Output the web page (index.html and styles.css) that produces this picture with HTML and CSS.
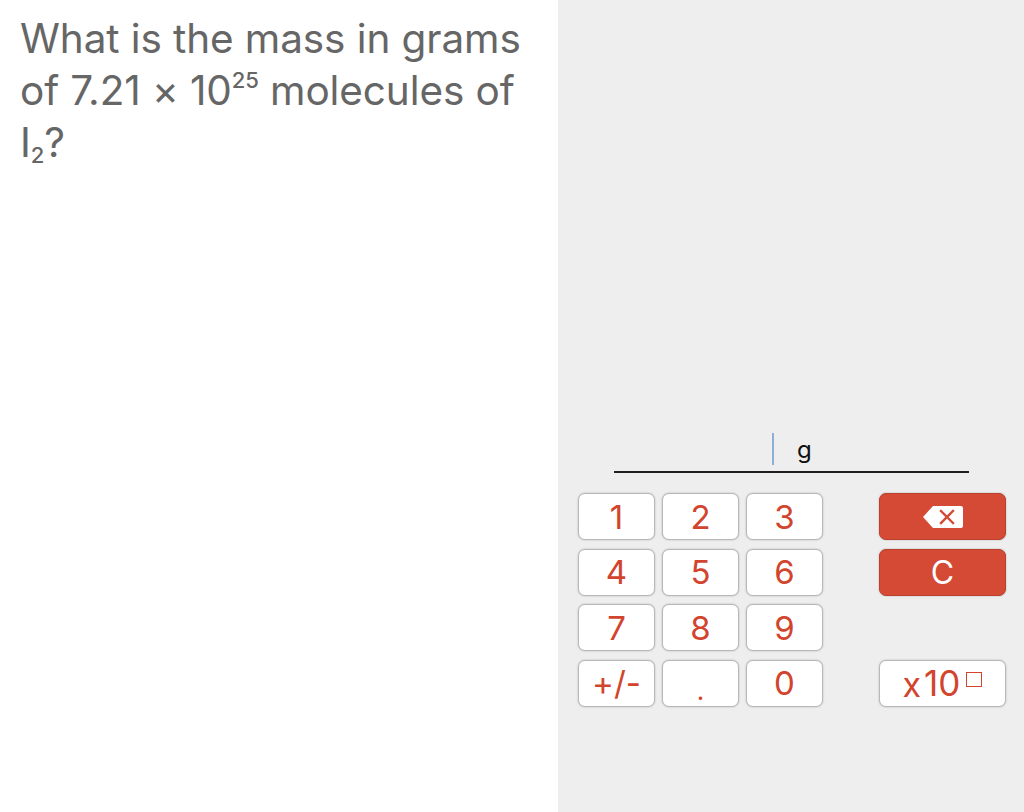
FILE: index.html
```html
<!DOCTYPE html>
<html>
<head>
<meta charset="utf-8">
<link rel="stylesheet" href="styles.css">
</head>
<body>
<div class="page">
  <div class="question">
    <p class="qtext">What is the mass in grams of 7.21 × 10<sup>25</sup> molecules of I<sub>2</sub>?</p>
  </div>
  <div class="answer-panel">
    <div class="answer-row">
      <div class="input-area"><span class="cursor"></span></div>
      <span class="unit">g</span>
    </div>
    <div class="keys">
      <div class="numpad">
        <button class="key">1</button>
        <button class="key">2</button>
        <button class="key">3</button>
        <button class="key">4</button>
        <button class="key">5</button>
        <button class="key">6</button>
        <button class="key">7</button>
        <button class="key">8</button>
        <button class="key">9</button>
        <button class="key">+/-</button>
        <button class="key dot">.</button>
        <button class="key">0</button>
      </div>
      <div class="side">
        <button class="key red"><svg class="bs" width="40" height="22" viewBox="0 0 40 22"><path d="M10 0 H38 a2 2 0 0 1 2 2 V20 a2 2 0 0 1 -2 2 H10 L0 11 Z" fill="#fff"/><path d="M18 5 L30 17 M30 5 L18 17" stroke="#d44a34" stroke-width="2.4" stroke-linecap="square"/></svg></button>
        <button class="key red c">C</button>
        <div class="spacer"></div>
        <button class="key exp"><span class="x">x</span><span class="ten">10</span><span class="box"></span></button>
      </div>
    </div>
  </div>
</div>
</body>
</html>
```
FILE: styles.css
```css
html, body {
  margin: 0;
  padding: 0;
  height: 100%;
}
body {
  font-family: "Inter", "Roboto", "Liberation Sans", sans-serif;
}
.page {
  display: flex;
  width: 1024px;
  height: 812px;
}
.question {
  width: 558px;
  background: #ffffff;
  padding: 13px 30px 0 20px;
  box-sizing: border-box;
}
.qtext {
  margin: 0;
  font-family: "Inter", "Roboto", sans-serif;
  font-size: 40.5px;
  line-height: 52px;
  color: #666666;
  letter-spacing: -0.1px;
}
.qtext sup {
  font-size: 22px;
  vertical-align: 0;
  position: relative;
  top: -17px;
  line-height: 0;
  font-weight: 500;
}
.qtext sub {
  font-size: 22px;
  line-height: 0;
  vertical-align: -6px;
  font-weight: 500;
}
.answer-panel {
  flex: 1;
  background: #eeeeee;
  padding-top: 431px;
  box-sizing: border-box;
}
.answer-row {
  margin-left: 56px;
  width: 355px;
  height: 40px;
  border-bottom: 2px solid #1e1e1e;
  display: flex;
  align-items: flex-start;
  box-sizing: content-box;
}
.input-area {
  width: 160px;
  height: 34px;
  display: flex;
  justify-content: flex-end;
  padding-top: 2px;
}
.cursor {
  width: 2px;
  height: 32px;
  background: #8eb0d6;
}
.unit {
  margin-left: 23px;
  font-size: 24px;
  color: #111;
  line-height: 30px;
  padding-top: 4px;
}
.keys {
  display: flex;
  margin-left: 20px;
  margin-top: 20px;
}
.numpad {
  display: grid;
  grid-template-columns: repeat(3, 77px);
  grid-auto-rows: 47px;
  column-gap: 7px;
  row-gap: 8.5px;
}
.key {
  margin: 0;
  padding: 0;
  border: 1px solid #b8b8b8;
  border-radius: 7px;
  background: #ffffff;
  box-shadow: 0 0 2px rgba(0,0,0,0.25);
  color: #d2442e;
  font-family: "Inter", "Roboto", sans-serif;
  font-size: 33px;
  font-weight: 400;
  display: flex;
  align-items: center;
  justify-content: center;
  box-sizing: border-box;
}
.key.dot {
  font-size: 26px;
  padding-top: 14px;
}
.side {
  margin-left: 56px;
  display: grid;
  grid-template-columns: 127px;
  grid-auto-rows: 47px;
  row-gap: 8.5px;
}
.key.red {
  background: #d44a34;
  border-color: #b8402d;
  color: #ffffff;
}
.key.c {
  font-size: 32px;
}
.exp .x {
  font-size: 34px;
  margin-right: 3px;
  padding-top: 3px;
}
.exp .ten {
  font-size: 35px;
}
.exp .box {
  width: 16px;
  height: 15px;
  border: 1.5px solid #d2442e;
  box-sizing: border-box;
  margin-left: 6px;
  margin-bottom: 8px;
}
```
